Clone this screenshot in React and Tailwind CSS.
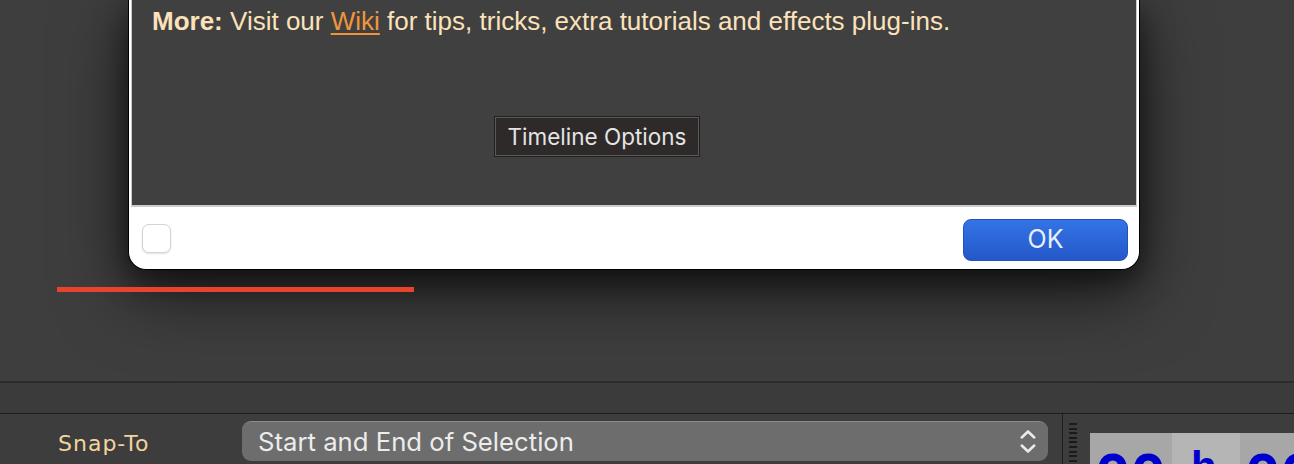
import React from 'react';

const inter = { fontFamily: '"Inter", "Liberation Sans", sans-serif' };

function UpDownIcon() {
    return (
        <svg width="16" height="24" viewBox="0 0 16 24" fill="none" stroke="#ebebeb" strokeWidth="2.5" strokeLinecap="round" strokeLinejoin="round">
            <polyline points="1.75,7.5 8,1.5 14.25,7.5" />
            <polyline points="1.75,15.5 8,21.5 14.25,15.5" />
        </svg>
    );
}

export default function App() {
    const grips = [0, 1, 2, 3, 4, 5, 6, 7, 8];

    return (
        <div className="relative h-[464px] w-full overflow-hidden bg-[#3e3e3e] font-['Liberation_Sans',sans-serif]">
            {/* Dialog */}
            <div className="relative z-10 ml-[128px] flex h-[270px] w-[1012px] flex-col rounded-b-[18px] border-x border-b border-black bg-white shadow-[0_10px_30px_rgba(0,0,0,0.55),0_24px_70px_rgba(0,0,0,0.55)]">
                <div className="mx-[2px] h-[207px] border-x border-b-2 border-[#cbcbcb] bg-[#404040] pl-[20px] pt-[6px]">
                    <p className="text-[26px] leading-[30px] text-[#fce2bb]">
                        <span className="font-bold">More:</span> Visit our{' '}
                        <span className="text-[#f0953e] underline decoration-2 underline-offset-[3px]">Wiki</span>{' '}
                        for tips, tricks, extra tutorials and effects plug-ins.
                    </p>
                </div>
                <div className="flex flex-1 items-start justify-between pl-[13px] pr-[11px]">
                    <div className="mt-[17px] h-[29px] w-[29px] rounded-[7px] border border-[#d4d4d4] bg-white shadow-[0_1px_2px_rgba(0,0,0,0.12)]" />
                    <button
                        style={inter}
                        className="mt-[12px] flex h-[42px] w-[165px] items-center justify-center rounded-[8px] border border-[#2352b8] bg-gradient-to-b from-[#3474e6] to-[#2457c9] text-[25px] text-[#e8eefb]"
                    >
                        OK
                    </button>
                </div>
            </div>

            {/* Tooltip */}
            <div
                style={inter}
                className="absolute left-[495px] top-[117px] z-30 flex h-[39px] w-[204px] items-center justify-center border border-[#5c5a59] bg-[#2d2a29] text-[22.5px] text-[#e4e4e4] shadow-[0_0_0_1px_rgba(0,0,0,0.5)]"
            >
                Timeline Options
            </div>

            {/* Track content behind */}
            <div className="relative z-20 ml-[57px] mt-[17px] h-[5px] w-[357px] bg-[#e8442b]" />

            <div className="mt-[89px] h-[2px] bg-[#2b2b2b]" />
            <div className="h-[30px] bg-[#3b3b3b]" />
            <div className="h-px bg-[#1c1c1c]" />

            {/* Selection toolbar */}
            <div className="flex h-[50px] bg-[#3d3d3d]">
                <div className="w-[242px] shrink-0 pl-[58px] pt-[17px]">
                    <span className="font-['DejaVu_Sans',sans-serif] text-[22px] leading-[26px] tracking-[1px] text-[#f3d49e]">Snap-To</span>
                </div>
                <div className="mt-[7px] flex h-[40px] w-[806px] shrink-0 items-center justify-between rounded-[9px] border-t border-[#8a8a8a] bg-[#6d6d6d] pl-[16px] pr-[12px]">
                    <span style={inter} className="text-[25.7px] leading-[38px] text-[#ececec]">Start and End of Selection</span>
                    <UpDownIcon />
                </div>
                <div className="ml-[14px] w-px shrink-0 bg-[#1e1e1e]" />
                <div className="ml-[6px] flex shrink-0 flex-col gap-[2.6px] pt-[9px]">
                    {grips.map(g => (
                        <div key={g} className="h-[2px] w-[8px] bg-[#1a1a1a]" />
                    ))}
                </div>
                <div className="ml-[13px] mt-[19px] flex h-[60px] shrink-0 overflow-hidden text-[#0000cc]">
                    <div className="h-full w-[82px] bg-[#a7a7a7] pl-[5px] pt-[12px] text-[64px] font-bold leading-[64px]">00</div>
                    <div className="h-full w-[68px] bg-[#b5b5b5] pl-[19px] pt-[13px] text-[42px] font-bold leading-[42px]">h</div>
                    <div className="h-full w-[82px] bg-[#a7a7a7] pl-[5px] pt-[12px] text-[64px] font-bold leading-[64px]">00</div>
                </div>
            </div>
        </div>
    );
}
